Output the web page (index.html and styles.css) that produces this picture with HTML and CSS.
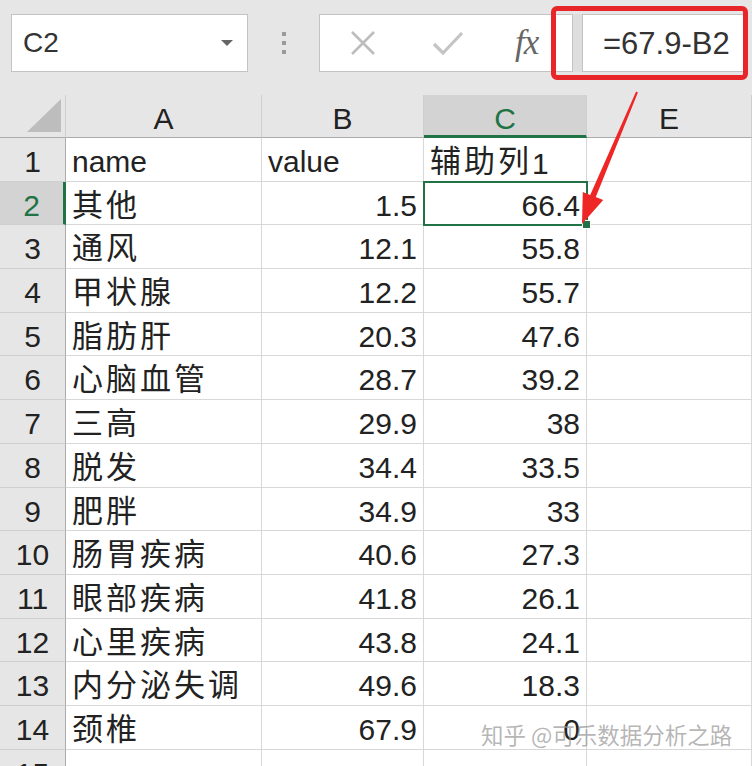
FILE: index.html
```html
<!DOCTYPE html>
<html lang="zh-CN">
<head>
    <meta charset="UTF-8">
    <title>Excel 辅助列</title>
    <link rel="stylesheet" href="styles.css">
</head>
<body>
    <div class="toolbar">
        <div class="namebox">
            <span>C2</span>
            <span class="caret"></span>
        </div>
        <div class="grip"><i></i><i></i><i></i></div>
        <div class="fbuttons">
            <svg class="icon-x" width="28" height="28" viewBox="0 0 28 28">
                <path d="M3 3 L25 25 M25 3 L3 25" stroke="#bdbdbd" stroke-width="2.6" fill="none"/>
            </svg>
            <svg class="icon-ok" width="34" height="28" viewBox="0 0 34 28">
                <path d="M3 15 L12 24 L31 4" stroke="#c4c4c4" stroke-width="3.2" fill="none"/>
            </svg>
            <span class="fx">fx</span>
        </div>
        <div class="fsep"></div>
        <div class="finput">=67.9-B2</div>
    </div>

    <div class="sheet">
        <div class="corner"><span class="tri"></span></div>
        <div class="colhead">A</div>
        <div class="colhead">B</div>
        <div class="colhead active">C</div>
        <div class="colhead">E</div>

        <div class="rowhead">1</div>
        <div class="cell">name</div>
        <div class="cell">value</div>
        <div class="cell"><span class="zh">辅助列</span>1</div>
        <div class="cell"></div>

        <div class="rowhead active">2</div>
        <div class="cell first"><span class="zh">其他</span></div>
        <div class="cell num">1.5</div>
        <div class="cell num sel">66.4</div>
        <div class="cell"></div>

        <div class="rowhead">3</div>
        <div class="cell"><span class="zh">通风</span></div>
        <div class="cell num">12.1</div>
        <div class="cell num">55.8</div>
        <div class="cell"></div>

        <div class="rowhead">4</div>
        <div class="cell"><span class="zh">甲状腺</span></div>
        <div class="cell num">12.2</div>
        <div class="cell num">55.7</div>
        <div class="cell"></div>

        <div class="rowhead">5</div>
        <div class="cell"><span class="zh">脂肪肝</span></div>
        <div class="cell num">20.3</div>
        <div class="cell num">47.6</div>
        <div class="cell"></div>

        <div class="rowhead">6</div>
        <div class="cell"><span class="zh">心脑血管</span></div>
        <div class="cell num">28.7</div>
        <div class="cell num">39.2</div>
        <div class="cell"></div>

        <div class="rowhead">7</div>
        <div class="cell"><span class="zh">三高</span></div>
        <div class="cell num">29.9</div>
        <div class="cell num">38</div>
        <div class="cell"></div>

        <div class="rowhead">8</div>
        <div class="cell"><span class="zh">脱发</span></div>
        <div class="cell num">34.4</div>
        <div class="cell num">33.5</div>
        <div class="cell"></div>

        <div class="rowhead">9</div>
        <div class="cell"><span class="zh">肥胖</span></div>
        <div class="cell num">34.9</div>
        <div class="cell num">33</div>
        <div class="cell"></div>

        <div class="rowhead">10</div>
        <div class="cell"><span class="zh">肠胃疾病</span></div>
        <div class="cell num">40.6</div>
        <div class="cell num">27.3</div>
        <div class="cell"></div>

        <div class="rowhead">11</div>
        <div class="cell"><span class="zh">眼部疾病</span></div>
        <div class="cell num">41.8</div>
        <div class="cell num">26.1</div>
        <div class="cell"></div>

        <div class="rowhead">12</div>
        <div class="cell"><span class="zh">心里疾病</span></div>
        <div class="cell num">43.8</div>
        <div class="cell num">24.1</div>
        <div class="cell"></div>

        <div class="rowhead">13</div>
        <div class="cell"><span class="zh">内分泌失调</span></div>
        <div class="cell num">49.6</div>
        <div class="cell num">18.3</div>
        <div class="cell"></div>

        <div class="rowhead">14</div>
        <div class="cell"><span class="zh">颈椎</span></div>
        <div class="cell num">67.9</div>
        <div class="cell num">0</div>
        <div class="cell"></div>

        <div class="rowhead">15</div>
        <div class="cell"></div>
        <div class="cell"></div>
        <div class="cell"></div>
        <div class="cell"></div>
    </div>

    <!-- annotation layer -->
    <div class="redbox"></div>
    <svg class="arrow" width="752" height="766" viewBox="0 0 752 766">
        <polygon points="636.1,91.6 637.9,92.4 595.8,197.1 603.2,200.1 582,224 582.8,191.9 590.2,194.9" fill="#ee2626"/>
    </svg>
    <div class="watermark">知乎 @可乐数据分析之路</div>
</body>
</html>
```

FILE: styles.css
```css
body {
    margin: 0;
    width: 752px;
    height: 766px;
    overflow: hidden;
    position: relative;
    background: #fff;
    font-family: "Liberation Sans", "Noto Sans CJK SC", sans-serif;
    color: #222;
}
.toolbar {
    height: 95px;
    box-sizing: border-box;
    background: #e6e6e6;
    display: flex;
    align-items: flex-start;
    padding-top: 14px;
}
.namebox {
    margin-left: 11px;
    width: 237px;
    height: 58px;
    box-sizing: border-box;
    background: #fff;
    border: 1px solid #c3c3c3;
    display: flex;
    align-items: center;
    justify-content: space-between;
    padding: 0 14px 0 11px;
    font-size: 28px;
    color: #333;
}
.caret {
    width: 0;
    height: 0;
    border-left: 6px solid transparent;
    border-right: 6px solid transparent;
    border-top: 6px solid #666;
}
.grip {
    width: 71px;
    height: 58px;
    display: flex;
    flex-direction: column;
    align-items: center;
    justify-content: center;
    gap: 5px;
}
.grip i {
    width: 4px;
    height: 4px;
    background: #9a9a9a;
}
.fbuttons {
    width: 254px;
    height: 58px;
    box-sizing: border-box;
    background: #fff;
    border: 1px solid #c3c3c3;
    display: flex;
    align-items: center;
    padding-left: 29px;
}
.icon-ok {
    margin-left: 54px;
}
.fx {
    margin-left: 50px;
    font-family: "Liberation Serif", serif;
    font-style: italic;
    font-size: 35px;
    color: #666;
    letter-spacing: -1px;
}
.fsep {
    width: 9px;
    height: 58px;
    background: #dedede;
}
.finput {
    width: 162px;
    height: 58px;
    box-sizing: border-box;
    background: #fff;
    border: 1px solid #c3c3c3;
    font-size: 31px;
    color: #333;
    line-height: 58px;
    padding-left: 20px;
    white-space: nowrap;
}
.sheet {
    display: grid;
    grid-template-columns: 66px 196px 162px 163px 165px;
    grid-template-rows: 43px repeat(15, 43.7px);
    font-size: 30px;
}
.corner, .colhead {
    background: #e6e6e6;
    border-right: 1px solid #cfcfcf;
    border-bottom: 1px solid #ababab;
    box-sizing: border-box;
}
.corner {
    position: relative;
}
.tri {
    position: absolute;
    right: 4px;
    bottom: 5px;
    width: 0;
    height: 0;
    border-left: 34px solid transparent;
    border-bottom: 33px solid #bdbdbd;
}
.colhead {
    display: flex;
    align-items: center;
    justify-content: center;
    padding-top: 6px;
    color: #222;
}
.colhead.active {
    background: #d3d3d3;
    color: #217346;
    border-bottom: 3px solid #217346;
    padding-top: 8px;
}
.rowhead {
    background: #e6e6e6;
    border-right: 1px solid #ababab;
    border-bottom: 1px solid #cfcfcf;
    box-sizing: border-box;
    text-align: center;
    line-height: 48px;
}
.rowhead.active {
    background: #d3d3d3;
    color: #217346;
    border-right: 3px solid #217346;
}
.cell {
    border-right: 1px solid #d8d8d8;
    border-bottom: 1px solid #d8d8d8;
    box-sizing: border-box;
    padding: 0 6px;
    line-height: 48px;
    white-space: nowrap;
}
.cell.num {
    text-align: right;
}
.zh {
    font-size: 31px;
    letter-spacing: 3px;
    vertical-align: 2px;
}
.sel {
    position: relative;
    outline: 2px solid #217346;
    outline-offset: -1px;
    z-index: 1;
}
.sel::after {
    content: "";
    position: absolute;
    right: -5px;
    bottom: -5px;
    width: 7px;
    height: 7px;
    background: #217346;
    border: 1px solid #fff;
}
.redbox {
    position: absolute;
    left: 551px;
    top: 6px;
    width: 197px;
    height: 74px;
    box-sizing: border-box;
    border: 5px solid #e8262a;
    border-radius: 6px;
}
.arrow {
    position: absolute;
    left: 0;
    top: 0;
    pointer-events: none;
    z-index: 2;
}
.watermark {
    position: absolute;
    left: 481px;
    top: 718px;
    font-size: 22.5px;
    font-family: "Noto Sans CJK SC", sans-serif;
    color: rgba(150, 150, 150, 0.7);
    z-index: 3;
}
```
